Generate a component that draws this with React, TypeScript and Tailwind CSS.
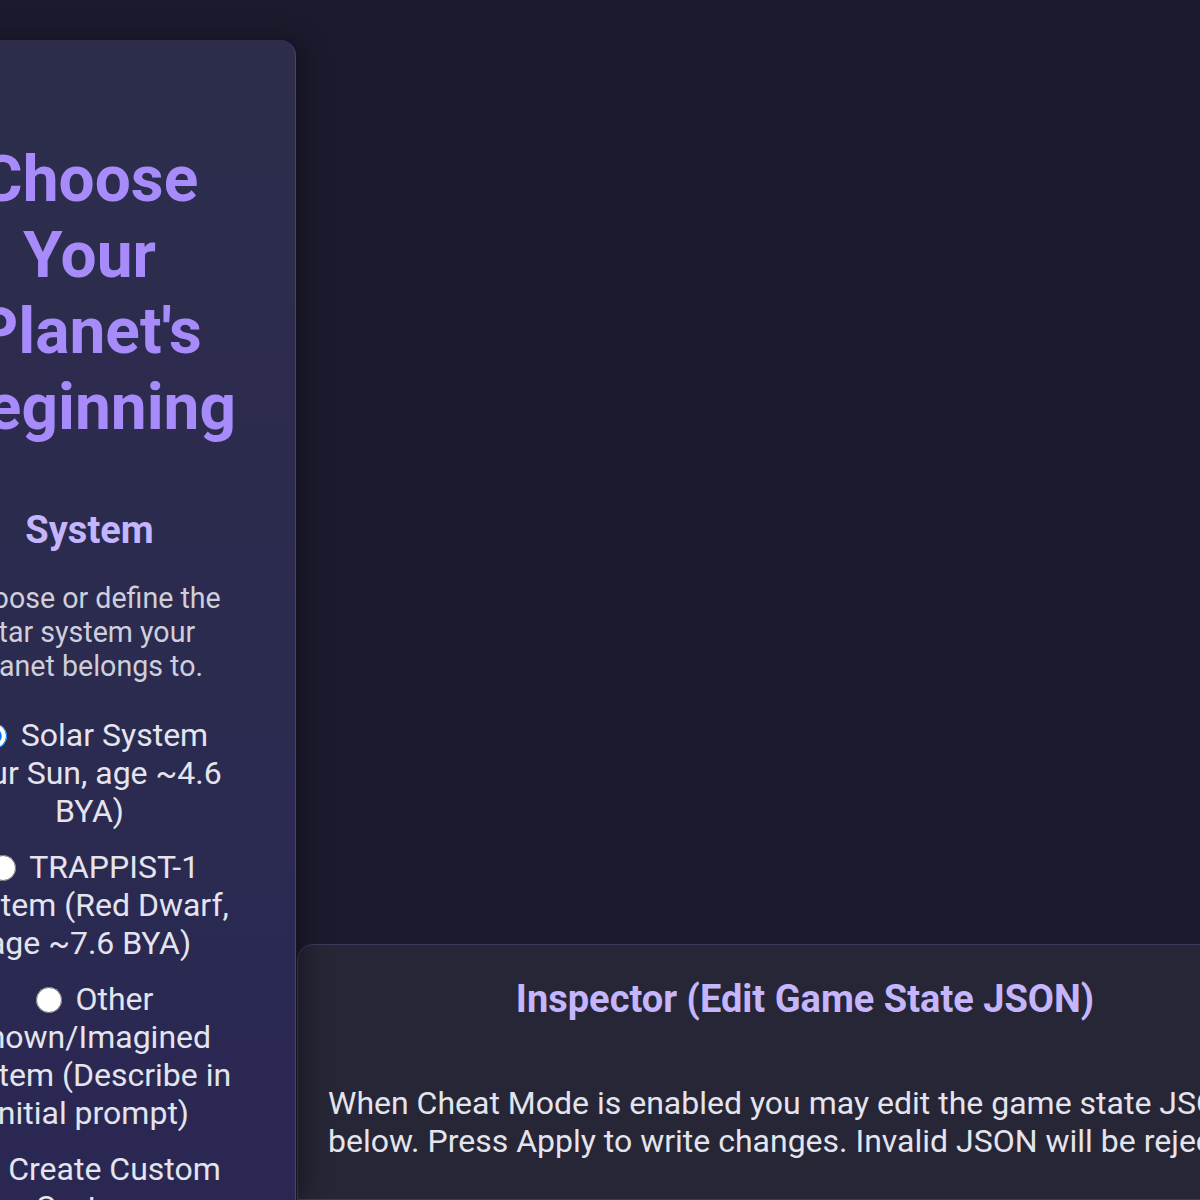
import { useState } from 'react'

const SYSTEMS = [
  { id: 'solar', label: 'Solar System (Our Sun, age ~4.6 BYA)' },
  { id: 'trappist', label: 'TRAPPIST-1 System (Red Dwarf, age ~7.6 BYA)' },
  { id: 'other', label: 'Other Known/Imagined System (Describe in initial prompt)' },
  { id: 'custom', label: 'Create Custom System' },
]

export default function App() {
  const [system, setSystem] = useState('solar')

  return (
    <div className="flex h-[1200px] w-[1200px] overflow-hidden bg-[#1c1b2e] font-['Roboto',sans-serif]">
      {/* Setup sidebar */}
      <aside className="relative z-10 ml-[-116px] mt-10 w-[412px] shrink-0 rounded-tr-2xl border-r border-[#45447a] bg-gradient-to-b from-[#2d2d4b] to-[#2a2853] px-[62px] pt-[102px] text-center shadow-[8px_0_24px_rgba(0,0,0,0.35)]">
        <h1 className="text-[64px] font-bold leading-[76px] text-[#a78bfa]">
          Choose Your Planet's Beginning
        </h1>

        <h2 className="mt-[62px] text-[38px] font-bold leading-[44px] text-[#c4b5fd]">System</h2>
        <p className="mt-[29px] text-[28.6px] leading-[34px] text-[#cfcfdc]">
          Choose or define the star system your planet belongs to.
        </p>

        <div className="mt-[33px] flex flex-col gap-[18px]">
          {SYSTEMS.map(s => (
            <label key={s.id} className="block text-[32px] leading-[38px] text-[#e4e4ee]">
              <input
                type="radio"
                name="system"
                checked={system === s.id}
                onChange={() => setSystem(s.id)}
                className="ml-[10px] mr-[6px] h-[26px] w-[26px] align-[-3px]"
              />{' '}
              {s.label}
            </label>
          ))}
        </div>
      </aside>

      <main className="flex min-w-0 flex-1 flex-col">
        <div className="h-[944px] shrink-0" />

        {/* Inspector */}
        <section className="ml-px w-[1016px] shrink-0 grow rounded-tl-2xl border border-[#3d3c5c] bg-[#262636] px-[30px] pt-[32px]">
          <h2 className="text-center text-[38px] font-bold leading-[44px] text-[#c4b5fd]">
            Inspector (Edit Game State JSON)
          </h2>
          <p className="mt-[63px] text-[32px] leading-[38px] text-[#e4e4ee]">
            When Cheat Mode is enabled you may edit the game state JSON below. Press Apply to write changes. Invalid JSON will be rejected.
          </p>
        </section>
      </main>
    </div>
  )
}
